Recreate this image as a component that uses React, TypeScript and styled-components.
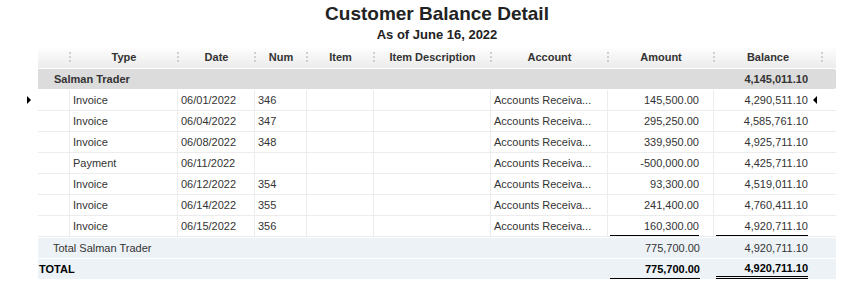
import React from 'react';
import styled, { createGlobalStyle, css } from 'styled-components';

const COLUMNS = '32px 108px 77px 52px 67px 117px 117px 106px 108px 14px';

const GlobalStyle = createGlobalStyle`
  body {
    margin: 0;
    background: #fff;
    font-family: "Liberation Sans", Arial, sans-serif;
    color: #333;
  }
`;

const Report = styled.div`
  width: 798px;
  margin-left: 38px;
`;

const Title = styled.h1`
  margin: 0;
  padding-top: 3px;
  font-size: 19px;
  line-height: 22px;
  font-weight: bold;
  text-align: center;
  color: #222;
`;

const Subtitle = styled.h2`
  margin: 0;
  padding-top: 1px;
  font-size: 13px;
  line-height: 18px;
  font-weight: bold;
  text-align: center;
  color: #222;
`;

const HeaderRow = styled.div`
  display: grid;
  grid-template-columns: ${COLUMNS};
  height: 22px;
  margin-top: 2px;
  background: linear-gradient(#ffffff, #ebebeb);
`;

const HeaderCell = styled.div<{ $handle?: boolean }>`
  position: relative;
  display: flex;
  align-items: center;
  justify-content: center;
  font-size: 11px;
  font-weight: bold;
  color: #333;
  white-space: nowrap;

  ${({ $handle }) =>
    $handle &&
    css`
      &::after {
        content: '';
        position: absolute;
        right: -1px;
        top: 6px;
        width: 2px;
        height: 11px;
        background: repeating-linear-gradient(to bottom, #cfcfcf 0 2px, transparent 2px 4px);
      }
    `}
`;

const GroupRow = styled.div`
  display: grid;
  grid-template-columns: ${COLUMNS};
  height: 20px;
  margin-top: 1px;
  margin-bottom: 1px;
  align-items: center;
  background: #dcdcdc;
  border-radius: 0 2px 2px 0;
  font-size: 11px;
  font-weight: bold;
  color: #333;
`;

const GroupLabel = styled.div`
  grid-column: 1 / 9;
  padding-left: 16px;
`;

const DataRow = styled.div`
  position: relative;
  display: grid;
  grid-template-columns: ${COLUMNS};
  height: 20px;
  border-bottom: 1px solid #ececec;
  font-size: 11px;
  color: #333;
`;

const Cell = styled.div<{ $divider?: boolean }>`
  display: flex;
  align-items: center;
  padding: 0 3px;
  white-space: nowrap;
  overflow: hidden;
  border-right: ${({ $divider }) => ($divider ? '1px solid #ececec' : 'none')};
`;

const FigureCell = styled.div<{ $divider?: boolean }>`
  display: flex;
  padding: 0 14px 0 2px;
  border-right: ${({ $divider }) => ($divider ? '1px solid #ececec' : 'none')};
`;

const Figure = styled.span<{ $rule?: 'single' | 'double' }>`
  flex: 1;
  display: flex;
  align-items: center;
  justify-content: flex-end;
  ${({ $rule }) => $rule === 'single' && css`border-bottom: 1px solid #000;`}
  ${({ $rule }) => $rule === 'double' && css`border-bottom: 3px double #000;`}
`;

const Marker = styled.span<{ $side: 'left' | 'right' }>`
  position: absolute;
  top: 6px;
  width: 0;
  height: 0;
  border-top: 4.5px solid transparent;
  border-bottom: 4.5px solid transparent;
  ${({ $side }) =>
    $side === 'left'
      ? css`left: -11px; border-left: 4px solid #000;`
      : css`left: 775px; border-right: 4px solid #000;`}
`;

const TotalRow = styled.div<{ $grand?: boolean }>`
  display: grid;
  grid-template-columns: ${COLUMNS};
  height: 20px;
  margin-top: 1px;
  background: #edf2f7;
  font-size: 11px;
  color: ${({ $grand }) => ($grand ? '#000' : '#333')};
  font-weight: ${({ $grand }) => ($grand ? 'bold' : 'normal')};
`;

const TotalLabel = styled.div<{ $indent: number }>`
  grid-column: 1 / 8;
  display: flex;
  align-items: center;
  padding-left: ${({ $indent }) => $indent}px;
`;

const TotalFigure = styled.div`
  display: flex;
  padding: 0 14px 0 2px;
`;

type Line = {
  type: string;
  date: string;
  num: string;
  amount: string;
  balance: string;
};

const lines: Line[] = [
  { type: 'Invoice', date: '06/01/2022', num: '346', amount: '145,500.00', balance: '4,290,511.10' },
  { type: 'Invoice', date: '06/04/2022', num: '347', amount: '295,250.00', balance: '4,585,761.10' },
  { type: 'Invoice', date: '06/08/2022', num: '348', amount: '339,950.00', balance: '4,925,711.10' },
  { type: 'Payment', date: '06/11/2022', num: '', amount: '-500,000.00', balance: '4,425,711.10' },
  { type: 'Invoice', date: '06/12/2022', num: '354', amount: '93,300.00', balance: '4,519,011.10' },
  { type: 'Invoice', date: '06/14/2022', num: '355', amount: '241,400.00', balance: '4,760,411.10' },
  { type: 'Invoice', date: '06/15/2022', num: '356', amount: '160,300.00', balance: '4,920,711.10' },
];

const headers = ['', 'Type', 'Date', 'Num', 'Item', 'Item Description', 'Account', 'Amount', 'Balance', ''];

export default function App() {
  return (
    <>
      <GlobalStyle />
      <Report>
        <Title>Customer Balance Detail</Title>
        <Subtitle>As of June 16, 2022</Subtitle>

        <HeaderRow>
          {headers.map((h, i) => (
            <HeaderCell key={i} $handle={i < headers.length - 1}>
              {h}
            </HeaderCell>
          ))}
        </HeaderRow>

        <GroupRow>
          <GroupLabel>Salman Trader</GroupLabel>
          <FigureCell>
            <Figure>4,145,011.10</Figure>
          </FigureCell>
        </GroupRow>

        {lines.map((line, i) => {
          const last = i === lines.length - 1;
          return (
            <DataRow key={i}>
              {i === 0 && <Marker $side="left" />}
              {i === 0 && <Marker $side="right" />}
              <Cell $divider />
              <Cell $divider>{line.type}</Cell>
              <Cell $divider>{line.date}</Cell>
              <Cell $divider>{line.num}</Cell>
              <Cell $divider />
              <Cell $divider />
              <Cell $divider>Accounts Receiva...</Cell>
              <FigureCell $divider>
                <Figure $rule={last ? 'single' : undefined}>{line.amount}</Figure>
              </FigureCell>
              <FigureCell>
                <Figure $rule={last ? 'single' : undefined}>{line.balance}</Figure>
              </FigureCell>
            </DataRow>
          );
        })}

        <TotalRow>
          <TotalLabel $indent={15}>Total Salman Trader</TotalLabel>
          <TotalFigure>
            <Figure>775,700.00</Figure>
          </TotalFigure>
          <TotalFigure>
            <Figure>4,920,711.10</Figure>
          </TotalFigure>
        </TotalRow>

        <TotalRow $grand>
          <TotalLabel $indent={1}>TOTAL</TotalLabel>
          <TotalFigure>
            <Figure $rule="single">775,700.00</Figure>
          </TotalFigure>
          <TotalFigure>
            <Figure $rule="double">4,920,711.10</Figure>
          </TotalFigure>
        </TotalRow>
      </Report>
    </>
  );
}
